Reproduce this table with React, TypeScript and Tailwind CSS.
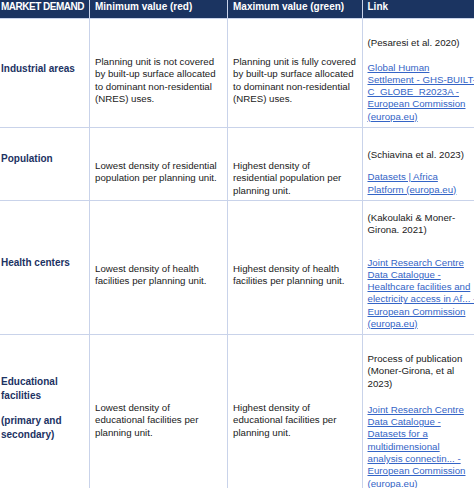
import React from "react";

const Lines = ({ lines, className = "" }: { lines: string[]; className?: string }) => (
  <div className={className}>
    {lines.map((l, i) => (
      <div key={i} className="whitespace-nowrap">
        {l}
      </div>
    ))}
  </div>
);

const LinkLines = ({ lines, className = "" }: { lines: string[]; className?: string }) => (
  <div className={className}>
    {lines.map((l, i) => (
      <div key={i} className="whitespace-nowrap">
        <span className="text-[#3464c6] underline decoration-[#3464c6] underline-offset-[1px]">{l}</span>
      </div>
    ))}
  </div>
);

export default function App() {
  const head = "bg-[#1b3461] text-white font-bold text-[10px] leading-[12px] pt-[1px] whitespace-nowrap";
  const c1 = "bg-white text-[#1c3263] font-bold text-[10px] leading-[13.5px] pl-[1px] pr-[2px]";
  const body = "bg-white text-[#1a1a1a] text-[9.7px] leading-[12.3px] pl-[5px]";
  const link = "bg-white text-[#1a1a1a] text-[9.7px] leading-[12.3px] pl-[4.5px]";
  return (
    <div className="w-[474px] h-[488px] overflow-hidden bg-white font-['Liberation_Sans',Arial,sans-serif]">
      <div className="grid w-[500px] grid-cols-[89px_137px_134px_137px] grid-rows-[18px_108px_72px_133px_160px] gap-px bg-[#c9d3ea]">
        {/* header */}
        <div className={`${head} pl-[1px] text-[9.2px] tracking-[-0.5px]`}>MARKET DEMAND</div>
        <div className={`${head} pl-[5px]`}>Minimum value (red)</div>
        <div className={`${head} pl-[5px]`}>Maximum value (green)</div>
        <div className={`${head} pl-[4.5px]`}>Link</div>

        {/* row 1 */}
        <div className={`${c1} pt-[43px]`}>Industrial areas</div>
        <div className={`${body} pt-[37px]`}>
          <Lines
            lines={[
              "Planning unit is not covered",
              "by built-up surface allocated",
              "to dominant non-residential",
              "(NRES) uses.",
            ]}
          />
        </div>
        <div className={`${body} pt-[37px]`}>
          <Lines
            lines={[
              "Planning unit is fully covered",
              "by built-up surface allocated",
              "to dominant non-residential",
              "(NRES) uses.",
            ]}
          />
        </div>
        <div className={`${link} pt-[18px]`}>
          <Lines lines={["(Pesaresi et al. 2020)"]} />
          <LinkLines
            className="mt-[12.3px]"
            lines={[
              "Global Human",
              "Settlement - GHS-BUILT-",
              "C_GLOBE_R2023A -",
              "European Commission",
              "(europa.eu)",
            ]}
          />
        </div>

        {/* row 2 */}
        <div className={`${c1} pt-[24px]`}>Population</div>
        <div className={`${body} pt-[31.5px]`}>
          <Lines lines={["Lowest density of residential", "population per planning unit."]} />
        </div>
        <div className={`${body} pt-[32px]`}>
          <Lines lines={["Highest density of", "residential population per", "planning unit."]} />
        </div>
        <div className={`${link} pt-[20.5px]`}>
          <Lines lines={["(Schiavina et al. 2023)"]} />
          <LinkLines className="mt-[10.5px]" lines={["Datasets | Africa", "Platform (europa.eu)"]} />
        </div>

        {/* row 3 */}
        <div className={`${c1} pt-[55px]`}>Health centers</div>
        <div className={`${body} pt-[62px]`}>
          <Lines lines={["Lowest density of health", "facilities per planning unit."]} />
        </div>
        <div className={`${body} pt-[62px]`}>
          <Lines lines={["Highest density of health", "facilities per planning unit."]} />
        </div>
        <div className={`${link} pt-[10.5px]`}>
          <Lines lines={["(Kakoulaki & Moner-", "Girona. 2021)"]} />
          <LinkLines
            className="mt-[20.5px]"
            lines={[
              "Joint Research Centre",
              "Data Catalogue -",
              "Healthcare facilities and",
              "electricity access in Af... -",
              "European Commission",
              "(europa.eu)",
            ]}
          />
        </div>

        {/* row 4 */}
        <div className={`${c1} pt-[40px]`}>
          <div>Educational facilities</div>
          <div className="mt-[12px]">(primary and secondary)</div>
        </div>
        <div className={`${body} pt-[67px]`}>
          <Lines lines={["Lowest density of", "educational facilities per", "planning unit."]} />
        </div>
        <div className={`${body} pt-[67px]`}>
          <Lines lines={["Highest density of", "educational facilities per", "planning unit."]} />
        </div>
        <div className={`${link} pt-[18px]`}>
          <Lines lines={["Process of publication", "(Moner-Girona, et al", "2023)"]} />
          <LinkLines
            className="mt-[14px]"
            lines={[
              "Joint Research Centre",
              "Data Catalogue -",
              "Datasets for a",
              "multidimensional",
              "analysis connectin... -",
              "European Commission",
              "(europa.eu)",
            ]}
          />
        </div>
      </div>
    </div>
  );
}
